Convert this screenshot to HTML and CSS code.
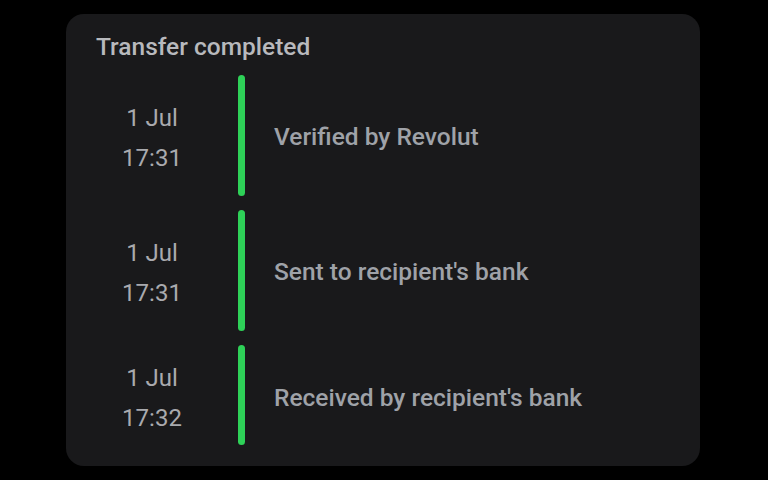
FILE: index.html
```html
<!DOCTYPE html>
<html lang="en">
<head>
    <meta charset="UTF-8">
    <meta name="viewport" content="width=device-width, initial-scale=1.0">
    <title>Transfer completed</title>
    <link rel="stylesheet" href="styles.css">
</head>
<body>
    <div class="card">
        <h2 class="card-title">Transfer completed</h2>

        <div class="timeline">
            <div class="step">
                <div class="step-time">
                    <span>1 Jul</span>
                    <span>17:31</span>
                </div>
                <div class="step-bar"></div>
                <div class="step-label">Verified by Revolut</div>
            </div>

            <div class="step">
                <div class="step-time">
                    <span>1 Jul</span>
                    <span>17:31</span>
                </div>
                <div class="step-bar"></div>
                <div class="step-label">Sent to recipient's bank</div>
            </div>

            <div class="step step-last">
                <div class="step-time">
                    <span>1 Jul</span>
                    <span>17:32</span>
                </div>
                <div class="step-bar"></div>
                <div class="step-label">Received by recipient's bank</div>
            </div>
        </div>
    </div>
</body>
</html>
```

FILE: styles.css
```css
/* Dark transfer status card */
body {
    font-family: Roboto, "Noto Sans", Arial, sans-serif;
    background-color: #000;
    margin: 0;
    padding: 14px 0 0 66px;
}

.card {
    width: 634px;
    height: 452px;
    box-sizing: border-box;
    padding: 18px 30px 21px 30px;
    background-color: #19191b;
    border-radius: 18px;
}

.card-title {
    margin: 0 0 14px 0;
    padding-top: 1px;
    font-size: 24.5px;
    font-weight: 500;
    line-height: 28px;
    color: #b8b9bd;
}

.timeline {
    display: flex;
    flex-direction: column;
    gap: 14px;
}

.step {
    display: flex;
    align-items: center;
    height: 121px;
}

.step-last {
    height: 100px;
}

.step-time {
    width: 112px;
    margin-right: 30px;
    padding-top: 4px;
    display: flex;
    flex-direction: column;
    align-items: center;
    font-size: 24px;
    line-height: 40px;
    color: #a9aaae;
}

.step-last .step-time {
    padding-top: 6px;
}

.step-bar {
    align-self: stretch;
    width: 7px;
    margin-right: 29px;
    border-radius: 4px;
    background-color: #2ed158;
}

.step-label {
    padding-top: 2px;
    font-size: 24.5px;
    font-weight: 500;
    color: #9fa2a8;
}

.step-last .step-label {
    padding-top: 4px;
}
```
